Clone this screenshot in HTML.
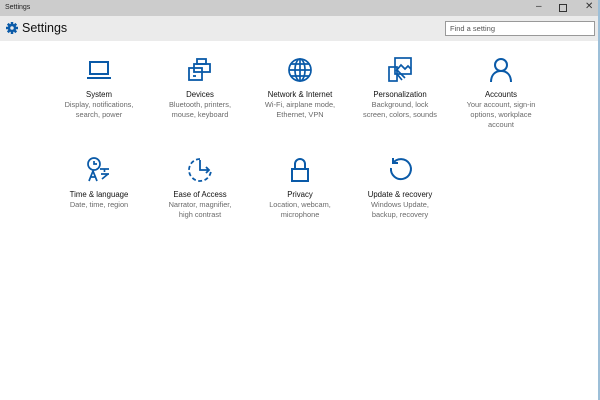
<!DOCTYPE html>
<html><head><style>
body{margin:0;width:600px;height:400px;background:#fff;font-family:"Liberation Sans",sans-serif;position:relative;overflow:hidden}
.tb{position:absolute;left:0;top:0;width:600px;height:16px;background:#cccccc;font-size:7px;color:#222}
.hd{position:absolute;left:0;top:16px;width:600px;height:25px;background:#ebebeb}
.edge{position:absolute;right:0;top:0;width:2px;height:400px;background:#9dbfd8}
.item{position:absolute;width:100px;text-align:center;color:#6a6a6a;font-size:7.4px;line-height:10px}
.item b{display:block;font-weight:normal;color:#111;font-size:7.8px}
.item svg{display:block;margin:0 auto 6px;width:28px;height:28px}
svg{stroke:#0a5aa8;fill:none;stroke-width:2}
</style></head><body>
<div class="tb"><span style="position:absolute;left:5px;top:4px">Settings</span>
<span style="position:absolute;left:536px;top:1px;font-size:10px;color:#333">–</span>
<span style="position:absolute;left:559px;top:4px;width:6px;height:6px;border:1px solid #333"></span>
<span style="position:absolute;left:585px;top:1px;font-size:10px;color:#333">✕</span></div>
<div class="hd">
<svg style="position:absolute;left:6px;top:6px;width:12px;height:12px;stroke-width:2.5" viewBox="0 0 12 12"><circle cx="6" cy="6" r="3"/><path d="M6 0v2M6 10v2M0 6h2M10 6h2M1.8 1.8l1.4 1.4M8.8 8.8l1.4 1.4M1.8 10.2l1.4-1.4M8.8 3.2l1.4-1.4"/></svg>
<span style="position:absolute;left:22px;top:5px;font-size:12.5px;color:#111">Settings</span>
<div style="position:absolute;left:445px;top:5px;width:148px;height:13px;background:#fff;border:1px solid #999;font-size:7.5px;color:#555;line-height:13px;text-indent:4px">Find a setting</div>
</div>
<div class="edge"></div>

<div class="item" style="left:49px;top:56px"><svg viewBox="0 0 28 28"><rect x="5" y="6" width="18" height="12"/><path d="M2 22h24"/></svg><b>System</b>Display, notifications,<br>search, power</div>
<div class="item" style="left:150px;top:56px"><svg viewBox="0 0 28 28" style="stroke-width:1.8"><rect x="11" y="3" width="9" height="5"/><rect x="8" y="8" width="16" height="8"/><rect x="3" y="12" width="13" height="12"/><path d="M7 20h3"/></svg><b>Devices</b>Bluetooth, printers,<br>mouse, keyboard</div>
<div class="item" style="left:250px;top:56px"><svg viewBox="0 0 28 28" style="stroke-width:1.7"><circle cx="14" cy="14" r="11"/><ellipse cx="14" cy="14" rx="5" ry="11"/><path d="M3 14h22M5 8h18M5 20h18M14 3v22"/></svg><b>Network &amp; Internet</b>Wi-Fi, airplane mode,<br>Ethernet, VPN</div>
<div class="item" style="left:350px;top:56px"><svg viewBox="0 0 28 28" style="stroke-width:1.7"><rect x="9" y="2" width="16" height="16"/><path d="M10 15l5-6 4 4 3-3 3 3"/><rect x="3" y="11" width="8" height="14"/><path d="M11 14l8 8M11 18l5 6"/></svg><b>Personalization</b>Background, lock<br>screen, colors, sounds</div>
<div class="item" style="left:451px;top:56px"><svg viewBox="0 0 28 28"><circle cx="14" cy="9" r="6"/><path d="M4 26c0-7 4-11 10-11s10 4 10 11"/></svg><b>Accounts</b>Your account, sign-in<br>options, workplace<br>account</div>

<div class="item" style="left:49px;top:156px"><svg viewBox="0 0 28 28" style="stroke-width:1.7"><circle cx="9" cy="8" r="6"/><path d="M9 5v3h3M4 25l4-10 4 10M5.5 21h5M15 13h9M19.5 13v3M16 18h8M17 23l6-5"/></svg><b>Time &amp; language</b>Date, time, region</div>
<div class="item" style="left:150px;top:156px"><svg viewBox="0 0 28 28" style="stroke-width:1.8"><path d="M14 3a11 11 0 1 0 11 11" stroke-dasharray="4 2.5"/><path d="M14 4v10h9M20 11l3 3-3 3"/></svg><b>Ease of Access</b>Narrator, magnifier,<br>high contrast</div>
<div class="item" style="left:250px;top:156px"><svg viewBox="0 0 28 28"><rect x="6" y="13" width="16" height="12"/><path d="M9 13V8a5 5 0 0 1 10 0v5"/></svg><b>Privacy</b>Location, webcam,<br>microphone</div>
<div class="item" style="left:350px;top:156px"><svg viewBox="0 0 28 28"><path d="M7 7a10 10 0 1 1-2 5"/><path d="M7 2v5h5" /></svg><b>Update &amp; recovery</b>Windows Update,<br>backup, recovery</div>
</body></html>
